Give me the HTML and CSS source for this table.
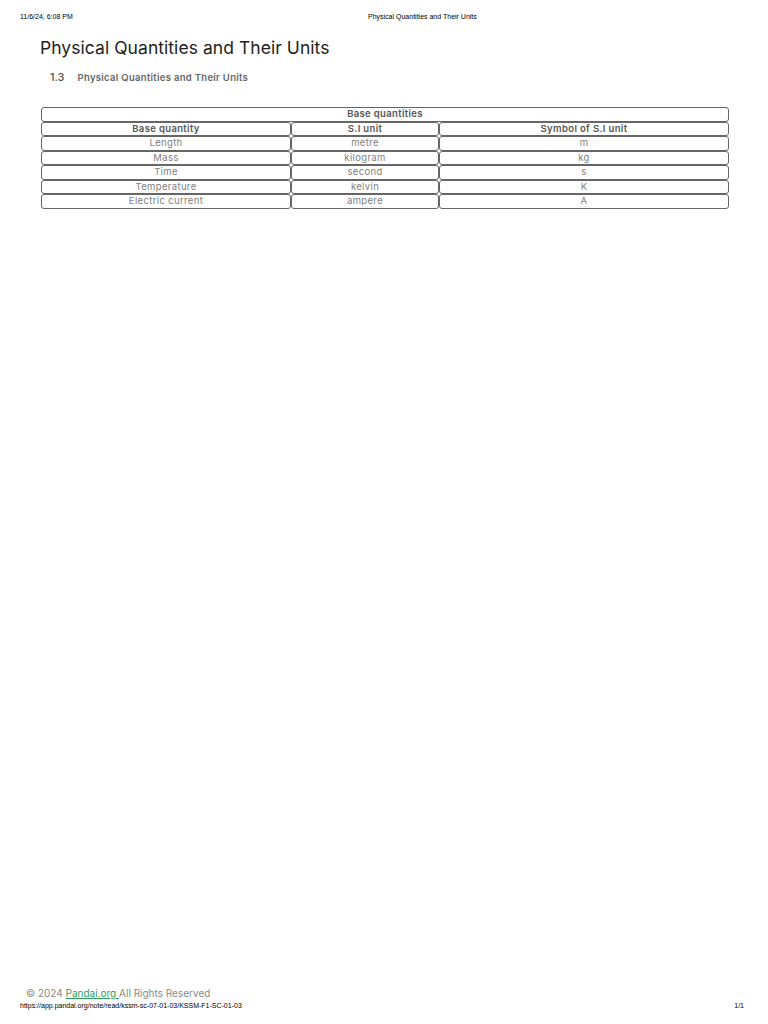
FILE: index.html
```html
<!DOCTYPE html>
<html>
<head>
<meta charset="utf-8">
<title>Physical Quantities and Their Units</title>
<link rel="stylesheet" href="styles.css">
</head>
<body>
<div class="page">
  <header class="print-head">
    <span class="date">11/6/24, 6:08 PM</span>
    <span class="doc-title">Physical Quantities and Their Units</span>
  </header>
  <main class="content">
    <h1 class="title">Physical Quantities and Their Units</h1>
    <div class="section">
      <span class="num">1.3</span>
      <span class="section-name">Physical Quantities and Their Units</span>
    </div>
    <table class="units">
      <tr><th colspan="3" class="caption">Base quantities</th></tr>
      <tr><th class="c1">Base quantity</th><th class="c2">S.I unit</th><th class="c3">Symbol of S.I unit</th></tr>
      <tr><td>Length</td><td>metre</td><td>m</td></tr>
      <tr><td>Mass</td><td>kilogram</td><td>kg</td></tr>
      <tr><td>Time</td><td>second</td><td>s</td></tr>
      <tr><td>Temperature</td><td>kelvin</td><td>K</td></tr>
      <tr><td>Electric current</td><td>ampere</td><td>A</td></tr>
    </table>
  </main>
  <footer class="foot">
    <div class="copy">© 2024 <a class="brand" href="#">Pandai.org </a>All Rights Reserved</div>
    <div class="print-foot">
      <span>https://app.pandai.org/note/read/kssm-sc-07-01-03/KSSM-F1-SC-01-03</span>
      <span>1/1</span>
    </div>
  </footer>
</div>
</body>
</html>
```

FILE: styles.css
```css
html, body {
  margin: 0;
  padding: 0;
  background: #fff;
}
body {
  font-family: "Inter", "Noto Sans", sans-serif;
  color: #333;
}
.page {
  height: 1024px;
  display: flex;
  flex-direction: column;
  box-sizing: border-box;
}
.print-head {
  display: flex;
  align-items: center;
  padding: 11px 20px 0 20px;
  height: 10px;
  font-family: "Liberation Sans", Arial, sans-serif;
  font-size: 7px;
  color: #000;
}
.print-head .date { flex: 0 0 348px; }
.content {
  flex: 1;
  padding: 0 40px 0 40px;
}
.title {
  margin: 16px 0 0 0;
  font-size: 17.5px;
  font-weight: 400;
  color: #222;
  letter-spacing: 0.05px;
  line-height: 21px;
}
.section {
  display: flex;
  align-items: baseline;
  margin: 12px 0 0 10px;
  gap: 13px;
}
.num {
  font-size: 11px;
  color: #555;
  font-weight: 500;
}
.section-name {
  font-size: 9.5px;
  font-weight: 600;
  color: #666;
  letter-spacing: 0.3px;
}
.units {
  margin: 23px 0 0 1px;
  width: 688px;
  border-collapse: separate;
  border-spacing: 0;
  font-size: 9.5px;
  letter-spacing: 0.35px;
  color: #808080;
}
.units th, .units td {
  border: 1px solid #666;
  border-radius: 3px;
  text-align: center;
  padding: 0;
  height: 12.5px;
  line-height: 12px;
  font-weight: 400;
}
.units th {
  font-weight: 600;
  color: #555;
}
.units .c1 { width: 248px; }
.units .c2 { width: 146px; }
.foot {
  padding: 0 0 15px 0;
}
.copy {
  padding-left: 26px;
  font-size: 10px;
  color: #888;
  margin-bottom: 3px;
}
.brand {
  color: #2a9d5c;
  text-decoration: underline;
}
.print-foot {
  display: flex;
  justify-content: space-between;
  padding: 0 24px 0 20px;
  font-family: "Liberation Sans", Arial, sans-serif;
  font-size: 7px;
  color: #000;
}
```
